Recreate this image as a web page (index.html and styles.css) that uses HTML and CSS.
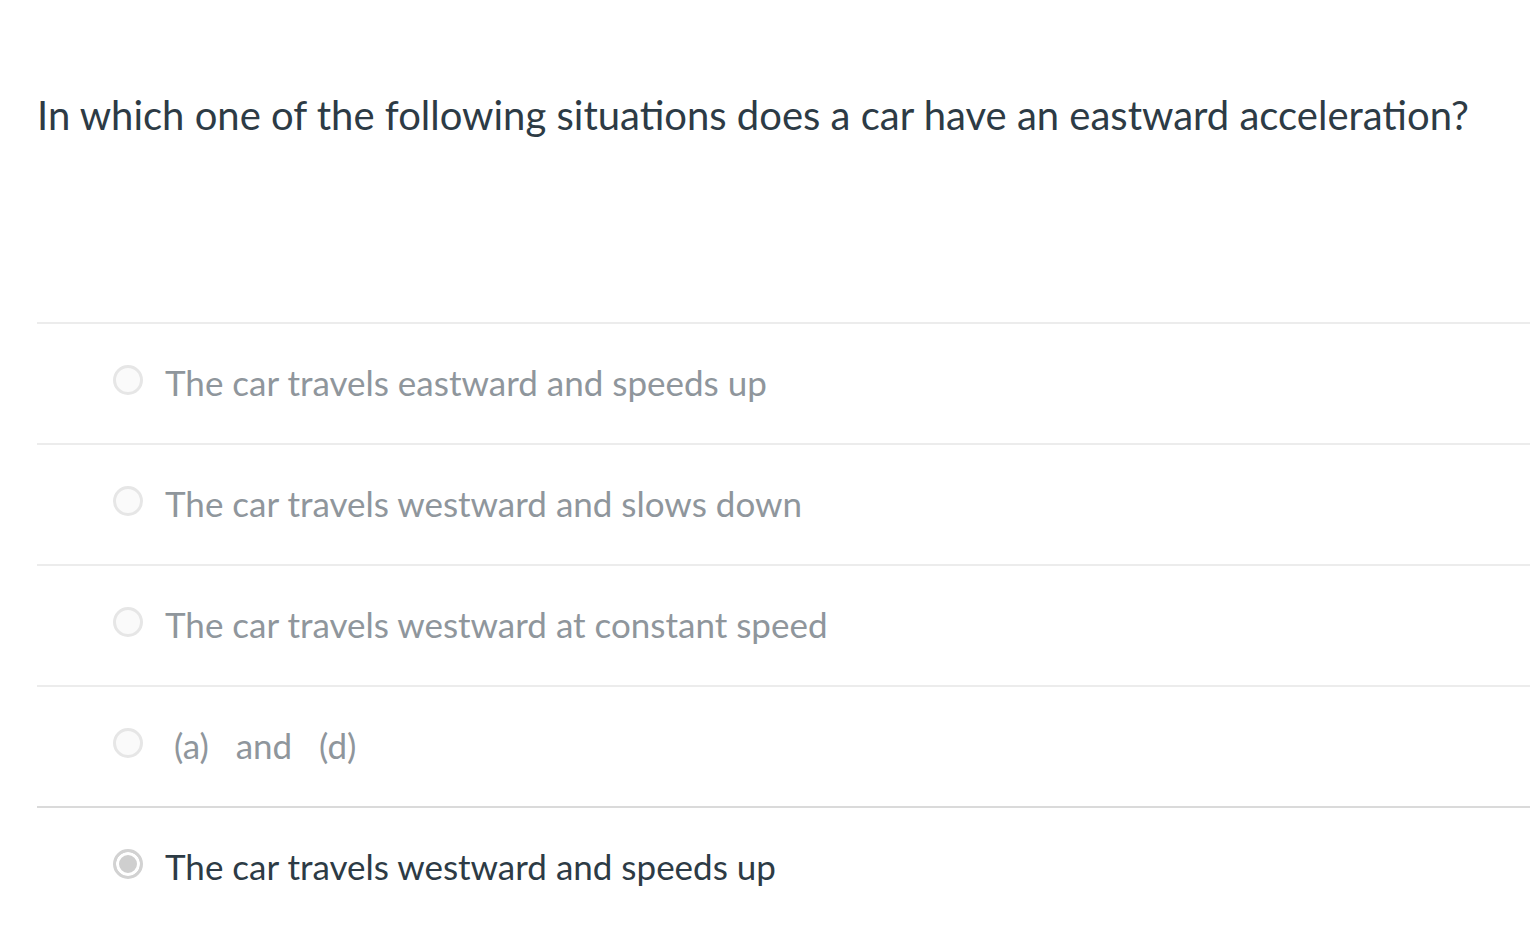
FILE: index.html
```html
<!DOCTYPE html>
<html lang="en">
<head>
<meta charset="utf-8">
<title>Question</title>
<link rel="stylesheet" href="styles.css">
</head>
<body>
<div class="quiz">
  <div class="question">In which one of the following situations does a car have an eastward acceleration?</div>
  <ul class="answers">
    <li class="answer"><span class="radio"></span><span class="label">The car travels eastward and speeds up</span></li>
    <li class="answer"><span class="radio"></span><span class="label">The car travels westward and slows down</span></li>
    <li class="answer"><span class="radio"></span><span class="label">The car travels westward at constant speed</span></li>
    <li class="answer"><span class="radio"></span><span class="label pre"> (a)   and   (d)</span></li>
    <li class="answer selected"><span class="radio"></span><span class="label">The car travels westward and speeds up</span></li>
  </ul>
</div>
</body>
</html>
```
FILE: styles.css
```css
html, body {
  margin: 0;
  padding: 0;
  background: #ffffff;
}
body {
  font-family: Lato, "Open Sans", sans-serif;
}
.quiz {
  padding-left: 37px;
}
.question {
  font-size: 40px;
  line-height: 48px;
  color: #2d3b45;
  padding-top: 91px;
  height: 322px;
  box-sizing: border-box;
}
.answers {
  list-style: none;
  margin: 0;
  padding: 0;
}
.answer {
  display: flex;
  align-items: center;
  height: 121px;
  border-top: 2px solid #ececec;
  padding-left: 76px;
  box-sizing: border-box;
}
.answer.selected {
  border-top: 2px solid #dadada;
}
.radio {
  width: 30px;
  height: 30px;
  box-sizing: border-box;
  border-radius: 50%;
  border: 3px solid #e6e6e6;
  background: #fafafa;
  flex: none;
  margin-right: 22px;
  margin-top: -8px;
}
.selected .radio {
  border-color: #d2d2d2;
  background: #cfcfcf;
  box-shadow: inset 0 0 0 3px #ffffff;
}
.label {
  font-size: 35px;
  color: #8f969c;
  padding-bottom: 4px;
}
.label.pre {
  white-space: pre;
}
.selected .label {
  color: #2d3b45;
}
```
